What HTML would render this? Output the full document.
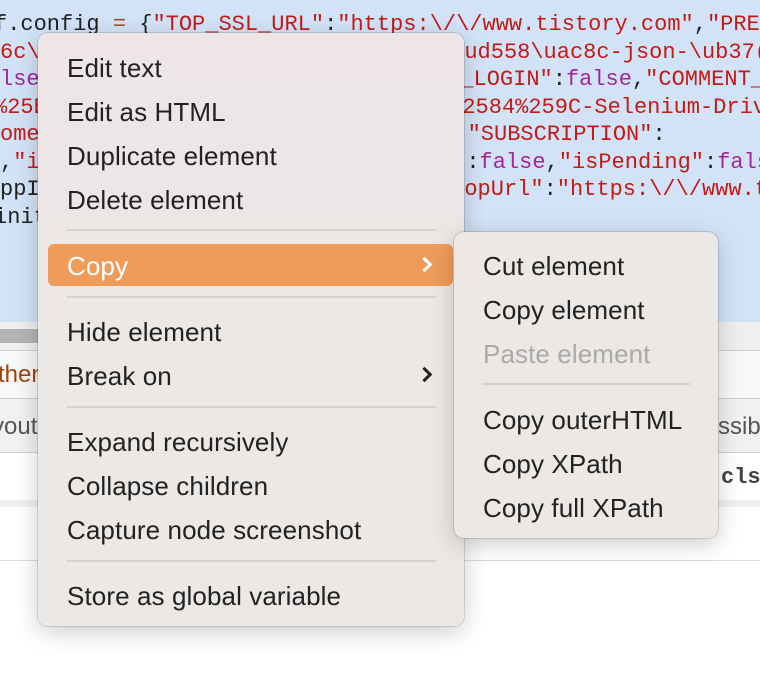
<!DOCTYPE html>
<html><head><style>
*{margin:0;padding:0;box-sizing:border-box}
body{width:760px;height:686px;position:relative;overflow:hidden;background:#fff;font-family:"Liberation Sans",sans-serif}
.abs{position:absolute}
.code{position:absolute;font-family:"Liberation Mono",monospace;font-size:22px;line-height:27px;white-space:pre;color:#222}
.s{color:#c41a16}.f{color:#a0269a}.o{color:#a0522d}
.menu{position:absolute;border-radius:10px;background:linear-gradient(#eee5e7,#ebe8e5 40%,#ebe8e5);box-shadow:0 6px 24px rgba(0,0,0,.2),0 0 0 1px rgba(0,0,0,.13)}
.it{position:absolute;font-size:26px;color:#222;line-height:30px;letter-spacing:0.1px}
.sep{position:absolute;height:2px;background:#d5d1ce}
.chev{position:absolute;width:11px;height:11px;border-right:3px solid #222;border-top:3px solid #222;transform:rotate(45deg)}
</style></head><body>
<div class="abs" style="left:0;top:0;width:760px;height:322px;background:#d3e3f7"></div>
<div class="abs" style="left:0;top:322px;width:760px;height:28px;background:#efefef"></div>
<div class="abs" style="left:0;top:329px;width:460px;height:14px;background:#b4b4b4"></div>
<div class="abs" style="left:0;top:350px;width:760px;height:48px;background:#f8f8f8;border-top:1px solid #d0d0d0"></div>
<div class="abs" style="left:0;top:398px;width:760px;height:55px;background:#f1f1f1;border-top:1px solid #d0d0d0;border-bottom:1px solid #cfcfcf"></div>
<div class="abs" style="left:0;top:500px;width:760px;height:7px;background:#f0f0f0"></div>
<div class="abs" style="left:0;top:560px;width:760px;height:1px;background:#dcdcdc"></div>
<div class="abs" style="left:-2px;top:361px;font-size:24px;color:#a0440a">then</div>
<div class="abs" style="left:-8px;top:413px;font-size:24px;color:#555">yout</div>
<div class="abs" style="left:718px;top:413px;font-size:24px;color:#555">ssib</div>
<div class="abs" style="left:721px;top:465px;font-size:22px;color:#444;font-family:'Liberation Mono',monospace;font-weight:bold">cls</div>

<div class="code" style="left:-6px;top:11px">f.config <span class="o">=</span> {<span class="s">"TOP_SSL_URL"</span>:<span class="s">"https:\/\/www.tistory.com"</span>,<span class="s">"PREV</span></div>
<div class="code" style="left:0;top:39px"><span class="s">6c\</span></div>
<div class="code" style="left:0;top:66px"><span class="f">lse</span></div>
<div class="code" style="left:-6px;top:94px"><span class="s">%25E</span></div>
<div class="code" style="left:0;top:121px"><span class="s">omep</span></div>
<div class="code" style="left:0;top:149px">,<span class="s">"i</span></div>
<div class="code" style="left:0;top:176px">ppI</div>
<div class="code" style="left:-6px;top:204px">init</div>
<div class="code" style="right:-8px;top:39px"><span class="s">\ud558\uac8c-json-\ub37(</span></div>
<div class="code" style="right:-4px;top:66px"><span class="s">ON_LOGIN"</span>:<span class="f">false</span>,<span class="s">"COMMENT_</span></div>
<div class="code" style="right:-6px;top:94px"><span class="s">%2584%259C-Selenium-Driv</span></div>
<div class="code" style="left:428px;top:121px"><span class="s">""</span>,<span class="s">"SUBSCRIPTION"</span>:</div>
<div class="code" style="right:-10px;top:149px"><span class="s">"</span>:<span class="f">false</span>,<span class="s">"isPending"</span>:<span class="f">fals</span></div>
<div class="code" style="right:-8px;top:176px"><span class="s">"topUrl"</span>:<span class="s">"https:\/\/www.t</span></div>

<div class="menu" style="left:38px;top:33px;width:426px;height:593px">
<div class="abs" style="left:10px;top:211px;width:405px;height:42px;background:#ef9c5b;border-radius:6px"></div>
<div class="it" style="left:29px;top:20px">Edit text</div>
<div class="it" style="left:29px;top:64px">Edit as HTML</div>
<div class="it" style="left:29px;top:108px">Duplicate element</div>
<div class="it" style="left:29px;top:152px">Delete element</div>
<div class="sep" style="left:29px;top:196px;width:369px"></div>
<div class="it" style="left:29px;top:218px;color:#fff">Copy</div>
<div class="chev" style="left:381px;top:226px;border-color:#fff"></div>
<div class="sep" style="left:29px;top:263px;width:369px"></div>
<div class="it" style="left:29px;top:284px">Hide element</div>
<div class="it" style="left:29px;top:328px">Break on</div>
<div class="chev" style="left:381px;top:336px"></div>
<div class="sep" style="left:29px;top:373px;width:369px"></div>
<div class="it" style="left:29px;top:394px">Expand recursively</div>
<div class="it" style="left:29px;top:438px">Collapse children</div>
<div class="it" style="left:29px;top:482px">Capture node screenshot</div>
<div class="sep" style="left:29px;top:527px;width:369px"></div>
<div class="it" style="left:29px;top:548px">Store as global variable</div>
</div>

<div class="menu" style="left:454px;top:232px;width:264px;height:306px;background:#ebe8e5">
<div class="it" style="left:29px;top:19px">Cut element</div>
<div class="it" style="left:29px;top:63px">Copy element</div>
<div class="it" style="left:29px;top:107px;color:#aaa">Paste element</div>
<div class="sep" style="left:28px;top:151px;width:208px"></div>
<div class="it" style="left:29px;top:173px">Copy outerHTML</div>
<div class="it" style="left:29px;top:217px">Copy XPath</div>
<div class="it" style="left:29px;top:261px">Copy full XPath</div>
</div>
</body></html>
